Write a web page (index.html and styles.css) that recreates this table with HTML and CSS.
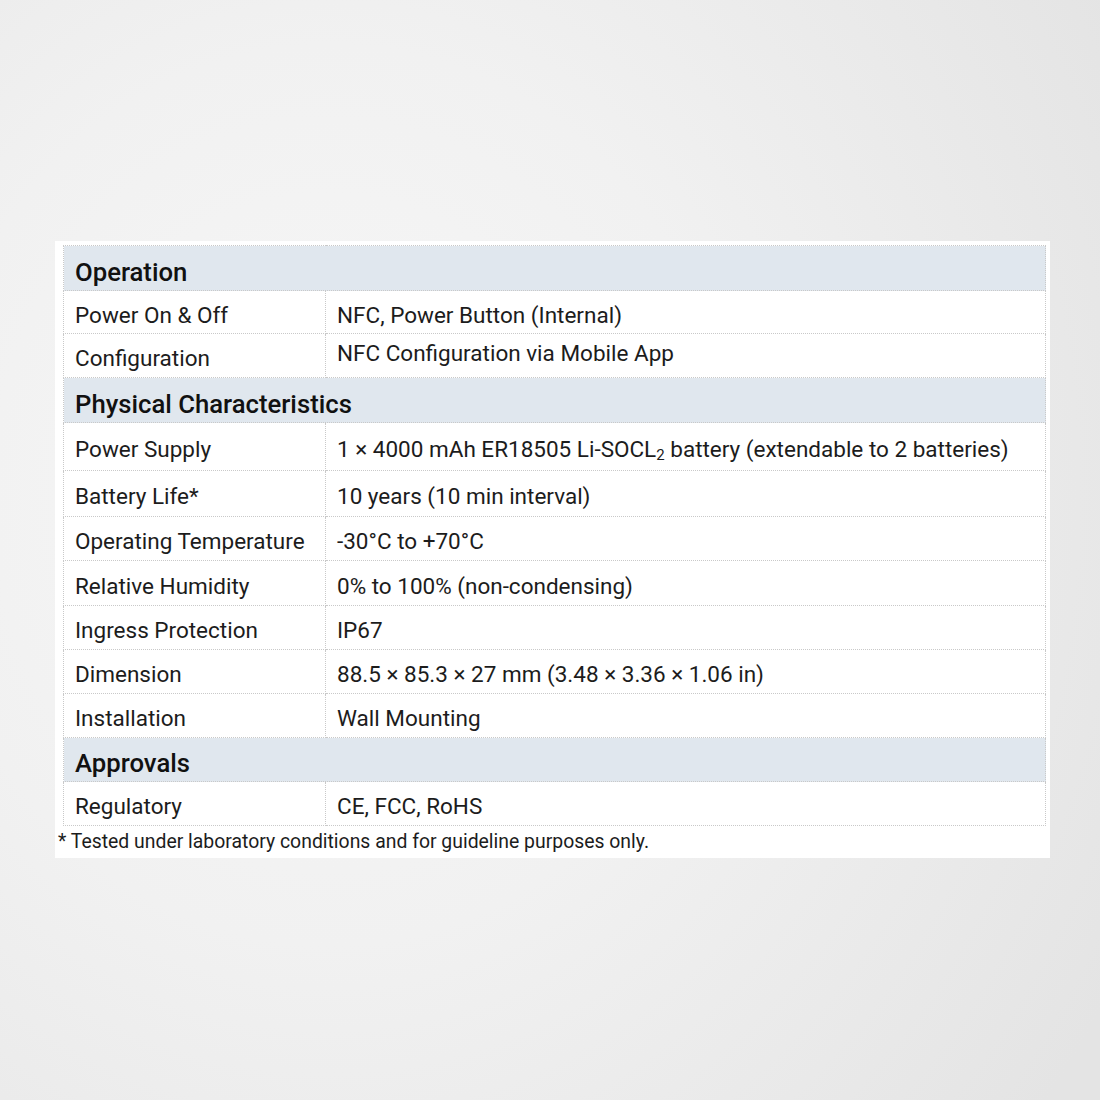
FILE: index.html
```html
<!DOCTYPE html>
<html>
<head>
<meta charset="utf-8">
<link rel="stylesheet" href="styles.css">
</head>
<body>
<div class="stage">
  <div class="panel">
    <table class="spec">
      <tr class="sec h45"><td colspan="2">Operation</td></tr>
      <tr class="h43"><td class="k">Power On &amp; Off</td><td class="v">NFC, Power Button (Internal)</td></tr>
      <tr class="h44"><td class="k">Configuration</td><td class="v up">NFC Configuration via Mobile App</td></tr>
      <tr class="sec h45"><td colspan="2">Physical Characteristics</td></tr>
      <tr class="h48"><td class="k">Power Supply</td><td class="v">1 × 4000 mAh ER18505 Li-SOCL<sub>2</sub> battery (extendable to 2 batteries)</td></tr>
      <tr class="h46"><td class="k">Battery Life*</td><td class="v">10 years (10 min interval)</td></tr>
      <tr class="h44"><td class="k">Operating Temperature</td><td class="v">-30°C to +70°C</td></tr>
      <tr class="h45"><td class="k">Relative Humidity</td><td class="v">0% to 100% (non-condensing)</td></tr>
      <tr class="h44"><td class="k">Ingress Protection</td><td class="v">IP67</td></tr>
      <tr class="h44"><td class="k">Dimension</td><td class="v">88.5 × 85.3 × 27 mm (3.48 × 3.36 × 1.06 in)</td></tr>
      <tr class="h44"><td class="k">Installation</td><td class="v">Wall Mounting</td></tr>
      <tr class="sec h44"><td colspan="2">Approvals</td></tr>
      <tr class="h44"><td class="k">Regulatory</td><td class="v">CE, FCC, RoHS</td></tr>
    </table>
    <p class="note">* Tested under laboratory conditions and for guideline purposes only.</p>
  </div>
</div>
</body>
</html>
```

FILE: styles.css
```css
html, body {
  margin: 0;
  padding: 0;
}
body {
  width: 1100px;
  height: 1100px;
  background: radial-gradient(ellipse 900px 1000px at 30% 45%, #f7f7f7 0%, #f1f1f1 45%, #e4e4e4 100%);
  font-family: Roboto, "Liberation Sans", sans-serif;
  color: #1c1c1c;
  overflow: hidden;
}
.stage {
  padding-top: 241px;
  padding-left: 55px;
}
.panel {
  width: 995px;
  height: 617px;
  background: #ffffff;
  padding: 4px 4px 0 8px;
  box-sizing: border-box;
}
.spec {
  width: 983px;
  border-collapse: collapse;
  font-size: 22.5px;
}
.spec td {
  border: 1px dotted #c9c9c9;
  padding: 5px 0 0 11px;
  vertical-align: middle;
  line-height: 24px;
  white-space: nowrap;
}
.spec .k {
  width: 250px;
}
.sec td {
  background: #e0e7ee;
  font-size: 25.7px;
  font-weight: 500;
  color: #111;
  padding-top: 7px;
}
.h43 td { height: 37px; }
.h44 td { height: 38px; }
.h45 td { height: 39px; }
.h46 td { height: 40px; }
.h48 td { height: 42px; }
.sec.h45 td { height: 37px; }
.sec.h44 td { height: 36px; }
.spec td.v.up { padding-top: 0; padding-bottom: 5px; }
sub {
  font-size: 15px;
  vertical-align: -3px;
  line-height: 0;
}
.note {
  margin: 4px 0 0 -5px;
  font-size: 19.4px;
  line-height: 24px;
  color: #1c1c1c;
}
```
